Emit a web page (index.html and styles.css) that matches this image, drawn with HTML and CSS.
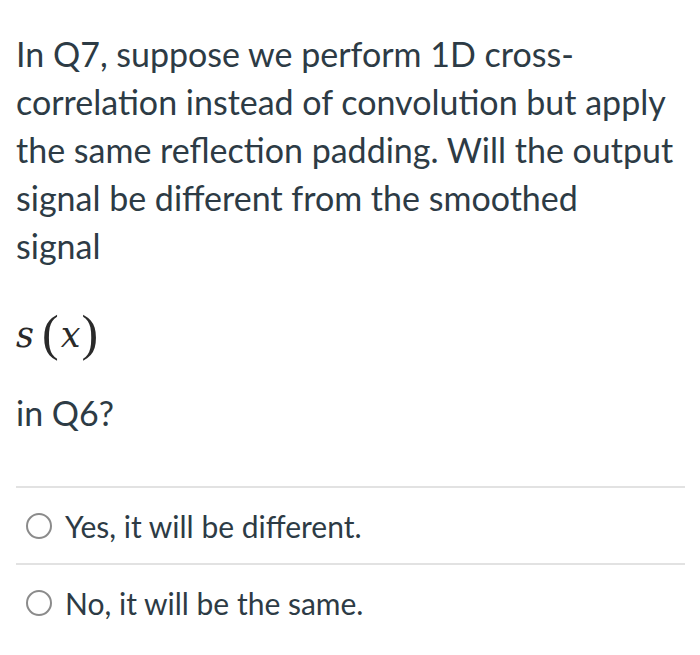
FILE: index.html
```html
<!DOCTYPE html>
<html>
<head>
<meta charset="utf-8">
<link rel="stylesheet" href="styles.css">
</head>
<body>
<div class="page">
  <div class="question">
    <p class="para">In Q7, suppose we perform 1D cross-<br>correlation instead of convolution but apply<br>the same reflection padding. Will the output<br>signal be different from the smoothed<br>signal</p>
    <div class="math"><span class="mi ms">s</span><span class="paren">(</span><span class="mi mx">x</span><span class="paren">)</span></div>
    <p class="para tail">in Q6?</p>
  </div>
  <div class="answers">
    <label class="option"><span class="radio"></span><span class="label-text">Yes, it will be different.</span></label>
    <label class="option"><span class="radio"></span><span class="label-text">No, it will be the same.</span></label>
  </div>
</div>
</body>
</html>
```
FILE: styles.css
```css
html, body {
  margin: 0;
  padding: 0;
  background: #ffffff;
}
.page {
  padding: 30px 15px 0 16px;
  font-family: Lato, "Noto Sans", sans-serif;
  color: #2d3b45;
}
.question {
  font-size: 34px;
  white-space: nowrap;
}
.para {
  margin: 0;
  line-height: 48px;
}
.math {
  display: flex;
  align-items: center;
  height: 44px;
  margin: 41px 0 34px 0;
  font-family: "Liberation Serif", "DejaVu Serif", serif;
  color: #2a2a2a;
}
.mi {
  font-family: "DejaVu Serif", "Liberation Serif", serif;
  font-style: italic;
  font-size: 35px;
  line-height: 1;
  position: relative;
  top: 2px;
}
.ms {
  margin-right: 8px;
}
.mx {
  margin: 0 1px 0 2px;
}
.paren {
  font-size: 50px;
  line-height: 1;
}
.tail {
  margin-bottom: 49px;
}
.answers {
  display: flex;
  flex-direction: column;
}
.option {
  display: flex;
  align-items: center;
  gap: 13px;
  height: 75px;
  border-top: 2px solid #e2e2e2;
  padding-left: 10px;
  font-size: 30px;
}
.radio {
  width: 22px;
  height: 22px;
  border: 2.5px solid #8b8b8b;
  border-radius: 50%;
  flex: none;
}
```
